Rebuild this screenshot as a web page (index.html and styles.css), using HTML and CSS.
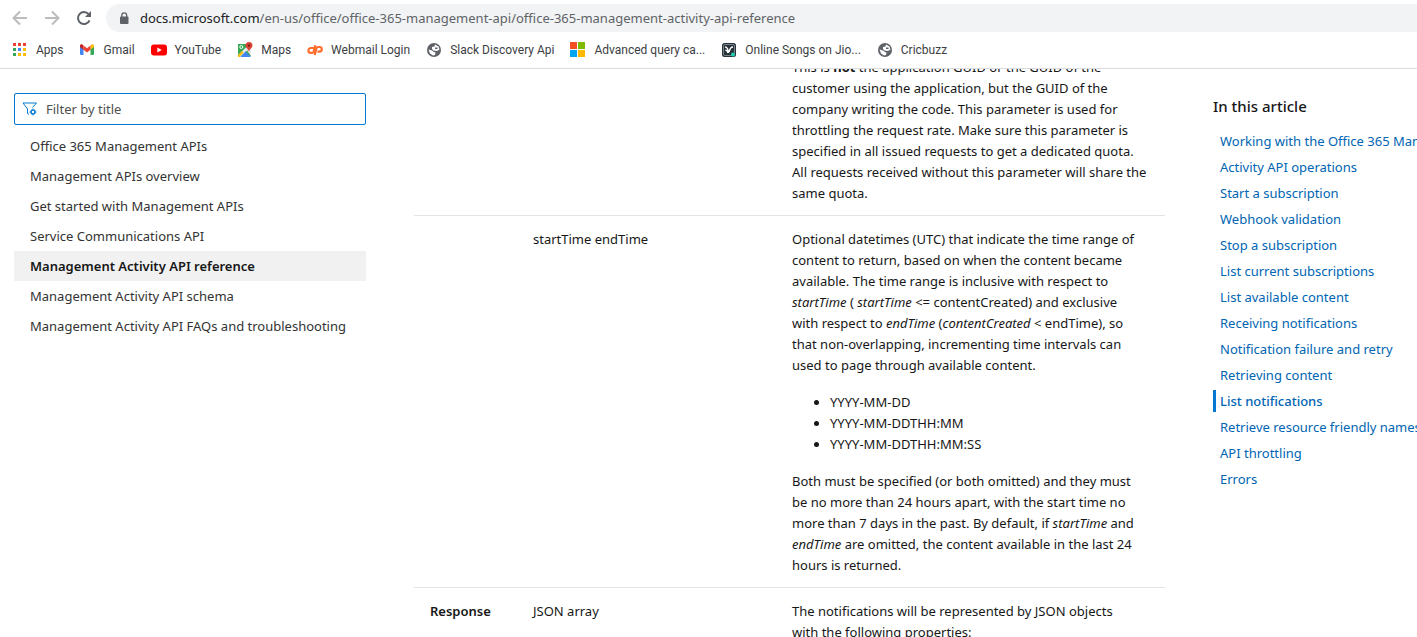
FILE: index.html
```
<!DOCTYPE html>
<html lang="en">
<head>
    <meta charset="UTF-8">
    <meta name="viewport" content="width=device-width, initial-scale=1.0">
    <title>Office 365 Management Activity API reference</title>
    <link rel="stylesheet" href="styles.css">
</head>
<body>
    <header class="browser">
        <div class="toolbar">
            <button class="nav-button" aria-label="Back" disabled>
                <svg width="16" height="16" viewBox="0 0 16 16"><path d="M15 8H2M8 1.5L1.5 8L8 14.5" /></svg>
            </button>
            <button class="nav-button" aria-label="Forward" disabled>
                <svg width="16" height="16" viewBox="0 0 16 16"><path d="M1 8H14M8 1.5L14.5 8L8 14.5" /></svg>
            </button>
            <button class="nav-button reload" aria-label="Reload">
                <svg width="16" height="16" viewBox="0 0 16 16"><path d="M13.5 10.5A6 6 0 1 1 12.6 4.2" /><path class="solid" d="M15 1V7H9Z" /></svg>
            </button>
            <div class="address">
                <svg width="10" height="13" viewBox="0 0 10 13"><rect x="1" y="4.5" width="8.5" height="7.5" rx="1" fill="#5f6368" /><path d="M2.8 5.5V3.4a2.4 2.4 0 0 1 4.9 0V5.5" fill="none" stroke="#5f6368" stroke-width="1.3" /></svg>
                <span class="url"><span class="host">docs.microsoft.com</span>/en-us/office/office-365-management-api/office-365-management-activity-api-reference</span>
            </div>
        </div>
        <nav class="bookmarks">
            <a href="#">
                <svg width="16" height="16" viewBox="0 0 16 16"><path fill="#ea4335" d="M1 1h3v3H1zM6 1h3v3H6zM11 1h3v3h-3z" /><path fill="#34a853" d="M1 6h3v3H1zM1 11h3v3H1z" /><path fill="#4285f4" d="M6 6h3v3H6z" /><path fill="#fbbc05" d="M11 6h3v3h-3zM6 11h3v3H6zM11 11h3v3h-3z" /></svg>
                Apps
            </a>
            <a href="#">
                <svg width="16" height="16" viewBox="0 0 16 16"><path fill="#4285f4" d="M0 4l3.500 2.500V13H1a1 1 0 0 1-1-1z" /><path fill="#34a853" d="M10.500 6.500L14 4v8a1 1 0 0 1-1 1h-2.500z" /><path fill="#fbbc04" d="M10.500 3.500l1.200-1c1-.8 2.300 0 2.300 1V5l-3.500 2.700z" /><path fill="#c5221f" d="M0 3.500c0-1 1.300-1.800 2.300-1l1.200 1v4.200L0 5z" /><path fill="#ea4335" d="M3.500 3.500L7 6.200l3.500-2.700v4.200L7 10.400 3.500 7.700z" /></svg>
                Gmail
            </a>
            <a href="#">
                <svg width="16" height="16" viewBox="0 0 16 16"><rect y="2.500" width="16" height="11" rx="3" fill="#f00" /><path fill="#fff" d="M6.300 5.500L10.800 8L6.300 10.500z" /></svg>
                YouTube
            </a>
            <a href="#">
                <svg width="16" height="16" viewBox="0 0 16 16"><path fill="#34a853" d="M1 2h9l4 4v8H1z" /><path fill="#4285f4" d="M3 15l5-6 6 6z" /><path fill="#e8eaed" d="M1 13L11 3.500l2.500 3L8.500 9.500 3 15H1z" /><path fill="#e8eaed" d="M10 8.500L14 5v9z" /><path fill="#fbbc05" d="M1 13l4-4 1.500 1.500L2.500 15H1z" /><circle cx="4.300" cy="5" r="1.500" fill="none" stroke="#fff" /><path fill="#db4437" d="M12 0A3.500 3.500 0 0 1 15.500 3.500C15.500 6 12.500 7 12 10C11.500 7 8.500 6 8.500 3.500A3.500 3.500 0 0 1 12 0z" /><circle cx="12" cy="3.500" r="1.200" fill="#7b231c" /></svg>
                Maps
            </a>
            <a href="#">
                <svg width="16" height="16" viewBox="0 0 16 16"><path d="M6.500 6H3.800a2.400 2.400 0 0 0 0 4.800H5.400Q6.300 10.800 6.600 9.800L8.300 3.200M7.700 13L9.600 6Q9.900 5 10.900 5H12.500a2.300 2.300 0 0 1 0 4.600H10.500" fill="none" stroke="#ff6c2c" stroke-width="2.200" stroke-linejoin="round" /></svg>
                Webmail Login
            </a>
            <a href="#">
                <svg width="16" height="16" viewBox="0 0 16 16"><circle cx="8" cy="8" r="7" fill="#5f6368" /><path fill="#fff" d="M9 2.500L12.500 4.500L13.500 7.500L11 9L7.500 8.500L6 7V5L8.500 4.500zM2.500 7.500L6 8.500L8 10L9.500 10.500L9 13L7 13.500L4 11.500z" /><path fill="#5f6368" d="M9 5.500h2.500v1.500H9z" /></svg>
                Slack Discovery Api
            </a>
            <a href="#">
                <svg width="16" height="16" viewBox="0 0 16 16"><path fill="#f25022" d="M0 0h7v7H0z" /><path fill="#7fba00" d="M8 0h7v7H8z" /><path fill="#00a4ef" d="M0 8h7v7H0z" /><path fill="#ffb900" d="M8 8h7v7H8z" /></svg>
                Advanced query ca...
            </a>
            <a href="#">
                <svg width="16" height="16" viewBox="0 0 16 16"><rect x="1" y="1" width="14" height="14" rx="2.500" fill="#263238" /><rect x="2.500" y="2.500" width="11" height="11" rx="1.500" fill="none" stroke="#78848a" /><path d="M4 5q3 0 3.500 6M8.200 10Q9 5 12 5M4.500 8q2 .5 2.500 3" fill="none" stroke="#fff" stroke-width="1.400" /><circle cx="12" cy="12.500" r="2" fill="#1ecfb4" /></svg>
                Online Songs on Jio...
            </a>
            <a href="#">
                <svg width="16" height="16" viewBox="0 0 16 16"><circle cx="8" cy="8" r="7" fill="#5f6368" /><path fill="#fff" d="M9 2.500L12.500 4.500L13.500 7.500L11 9L7.500 8.500L6 7V5L8.500 4.500zM2.500 7.500L6 8.500L8 10L9.500 10.500L9 13L7 13.500L4 11.500z" /><path fill="#5f6368" d="M9 5.500h2.500v1.500H9z" /></svg>
                Cricbuzz
            </a>
        </nav>
    </header>

    <div class="page">
        <aside class="sidebar">
            <label class="filter">
                <svg width="16" height="16" viewBox="0 0 16 16"><path d="M7 13.500L5.500 12.500V8L1 2H14.500L10.500 6.500" /><circle cx="11" cy="11" r="2" stroke-width="1.500" /><path d="M11 7.500v1M11 13.500v1M7.500 11h1M13.500 11h1" /></svg>
                <input type="text" placeholder="Filter by title" aria-label="Filter by title">
            </label>
            <nav class="contents">
                <a href="#">Office 365 Management APIs</a>
                <a href="#">Management APIs overview</a>
                <a href="#">Get started with Management APIs</a>
                <a href="#">Service Communications API</a>
                <a href="#" class="selected">Management Activity API reference</a>
                <a href="#">Management Activity API schema</a>
                <a href="#">Management Activity API FAQs and troubleshooting</a>
            </nav>
        </aside>

        <main class="article">
            <table class="params">
                <tbody>
                    <tr>
                        <th></th>
                        <td></td>
                        <td>This is <strong>not</strong> the application GUID or the GUID of the customer using the application, but the GUID of the company writing the code. This parameter is used for throttling the request rate. Make sure this parameter is specified in all issued requests to get a dedicated quota. All requests received without this parameter will share the same quota.</td>
                    </tr>
                    <tr>
                        <th></th>
                        <td>startTime endTime</td>
                        <td>
                            <p>Optional datetimes (UTC) that indicate the time range of content to return, based on when the content became available. The time range is inclusive with respect to <em>startTime</em> ( <em>startTime</em> &lt;= contentCreated) and exclusive<br>with respect to <em>endTime</em> (<em>contentCreated</em> &lt; endTime), so<br>that non-overlapping, incrementing time intervals can used to page through available content.</p>
                            <ul>
                                <li>YYYY-MM-DD</li>
                                <li>YYYY-MM-DDTHH:MM</li>
                                <li>YYYY-MM-DDTHH:MM:SS</li>
                            </ul>
                            <p>Both must be specified (or both omitted) and they must be no more than 24 hours apart, with the start time no more than 7 days in the past. By default, if <em>startTime</em> and <em>endTime</em> are omitted, the content available in the last 24 hours is returned.</p>
                        </td>
                    </tr>
                    <tr>
                        <th>Response</th>
                        <td>JSON array</td>
                        <td>The notifications will be represented by JSON objects<br>with the following properties:</td>
                    </tr>
                </tbody>
            </table>
        </main>

        <aside class="outline">
            <h2>In this article</h2>
            <nav>
                <a href="#">Working with the Office 365 Management Activity API</a>
                <a href="#">Activity API operations</a>
                <a href="#">Start a subscription</a>
                <a href="#">Webhook validation</a>
                <a href="#">Stop a subscription</a>
                <a href="#">List current subscriptions</a>
                <a href="#">List available content</a>
                <a href="#">Receiving notifications</a>
                <a href="#">Notification failure and retry</a>
                <a href="#">Retrieving content</a>
                <a href="#" class="current">List notifications</a>
                <a href="#">Retrieve resource friendly names</a>
                <a href="#">API throttling</a>
                <a href="#">Errors</a>
            </nav>
        </aside>
    </div>
</body>
</html>
```
FILE: styles.css
```
:root {
    --text: #171717;
    --link: #0065b3;
    --accent: #0078d4;
    --border: #e3e3e3;
    --chrome-gray: #5f6368;
}

* {
    box-sizing: border-box;
}

body {
    margin: 0;
    height: 100vh;
    overflow: hidden;
    display: flex;
    flex-direction: column;
    font-family: "Noto Sans", "Open Sans", sans-serif;
    font-size: 13px;
    line-height: 21px;
    color: var(--text);
    background: #fff;
}

a {
    text-decoration: none;
}

svg {
    flex: none;
}

/* browser bar */
.browser {
    flex: none;
    border-bottom: 1px solid #dadce0;
}

.toolbar {
    display: flex;
    align-items: center;
    gap: 16px;
    padding: 4px 0 4px 12px;
}

.nav-button {
    display: flex;
    padding: 0;
    border: none;
    background: none;
}

.nav-button svg {
    fill: none;
    stroke: #babcbe;
    stroke-width: 2;
}

.nav-button.reload svg {
    stroke: var(--chrome-gray);
}

.nav-button .solid {
    fill: var(--chrome-gray);
    stroke: none;
}

.address {
    flex: 1;
    display: flex;
    align-items: center;
    gap: 11px;
    height: 28px;
    margin-left: -2px;
    padding-left: 13px;
    border-radius: 14px 0 0 14px;
    background: #f1f3f4;
}

.url {
    color: var(--chrome-gray);
    white-space: nowrap;
}

.host {
    color: #202124;
}

.bookmarks {
    display: flex;
    gap: 16px;
    padding: 4px 12px 8px;
    height: 32px;
}

.bookmarks a {
    display: flex;
    align-items: center;
    gap: 8px;
    font-family: Roboto, sans-serif;
    font-size: 12px;
    line-height: 20px;
    color: #3c4043;
    white-space: nowrap;
}

/* page */
.page {
    flex: 1;
    min-height: 0;
    display: flex;
    gap: 48px;
    padding-left: 14px;
    overflow: hidden;
}

.sidebar {
    flex: none;
    width: 352px;
    padding-top: 24px;
}

.filter {
    display: flex;
    align-items: center;
    gap: 8px;
    height: 32px;
    padding: 0 7px;
    border: 1px solid var(--accent);
    border-radius: 2px;
}

.filter svg {
    fill: none;
    stroke: var(--accent);
}

.filter input {
    flex: 1;
    padding: 0;
    border: none;
    outline: none;
    font: inherit;
    color: var(--text);
}

.filter input::placeholder {
    color: #505050;
    opacity: 1;
}

.contents {
    display: flex;
    flex-direction: column;
    padding-top: 6px;
}

.contents a {
    padding: 0 16px;
    line-height: 30px;
    color: #333;
    white-space: nowrap;
}

.contents .selected {
    background: #f1f1f1;
    color: var(--text);
    font-weight: 600;
}

.article {
    flex: 1;
    min-width: 0;
}

/* scrolled part way through the first row */
.params {
    width: 100%;
    margin-top: -25px;
    border-collapse: collapse;
    table-layout: fixed;
}

.params th,
.params td {
    padding: 13px 16px 11px;
    border-bottom: 1px solid var(--border);
    text-align: left;
    vertical-align: top;
}

.params th {
    width: 103px;
    font-weight: 600;
}

.params td:nth-child(2) {
    width: 259px;
}

.params p {
    margin: 0;
}

.params ul {
    margin: 16px 0;
    padding-left: 38px;
}

.outline {
    flex: none;
    width: 204px;
    padding-top: 27px;
    overflow: hidden;
}

.outline h2 {
    margin: 0 0 13px;
    font-size: 15px;
    line-height: 21px;
    font-weight: 500;
}

.outline nav {
    display: flex;
    flex-direction: column;
    gap: 4px;
}

.outline a {
    padding-left: 4px;
    border-left: 3px solid transparent;
    line-height: 22px;
    color: var(--link);
    white-space: nowrap;
}

.outline .current {
    border-color: var(--accent);
    font-weight: 500;
}
```
